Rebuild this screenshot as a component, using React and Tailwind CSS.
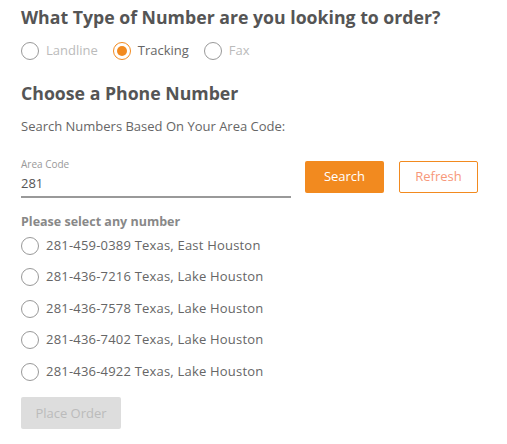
import { useState } from 'react'

const numbers = [
  '281-459-0389 Texas, East Houston',
  '281-436-7216 Texas, Lake Houston',
  '281-436-7578 Texas, Lake Houston',
  '281-436-7402 Texas, Lake Houston',
  '281-436-4922 Texas, Lake Houston',
]

// Radio
function Radio({ checked, label, muted, className = '' }) {
  return (
    <label className="flex items-center gap-[7px] cursor-pointer">
      <span className={`w-[18px] h-[18px] rounded-full border flex items-center justify-center ${checked ? 'border-[#f28a1f]' : 'border-[#999]'}`}>
        {checked && <span className="w-[10px] h-[10px] rounded-full bg-[#f28a1f]" />}
      </span>
      <span className={`text-[13px] ${muted ? 'text-[#bbb]' : 'text-[#666]'} ${className}`}>{label}</span>
    </label>
  )
}

export default function App() {
  const [type] = useState('Tracking')
  return (
    <div className="bg-white w-[507px] h-[444px] px-[21px] pt-[5px]" style={{ fontFamily: '"Open Sans", sans-serif' }}>
      <h2 className="text-[17.7px] font-bold text-[#555] leading-[24px]">What Type of Number are you looking to order?</h2>
      <div className="flex items-center gap-[15px] mt-[12px]">
        {['Landline', 'Tracking', 'Fax'].map(t => (
          <Radio key={t} label={t} checked={type === t} muted={type !== t} />
        ))}
      </div>

      <h2 className="text-[17.7px] font-bold text-[#555] leading-[24px] mt-[20px]">Choose a Phone Number</h2>
      <p className="text-[13px] text-[#666] mt-[12px]">Search Numbers Based On Your Area Code:</p>

      <div className="flex items-start mt-[22px]">
        <div className="w-[270px]">
          <p className="text-[10px] text-[#999] leading-[12px]">Area Code</p>
          <p className="text-[13px] text-[#555] leading-[18px] mt-[4px] pb-[4px] border-b-2 border-[#999]">281</p>
        </div>
        <button className="ml-[14px] mt-[3px] w-[79px] h-[32px] bg-[#f28a1f] rounded-[2px] text-white text-[13px]">Search</button>
        <button className="ml-[15px] mt-[3px] w-[79px] h-[32px] border border-[#f28a1f] rounded-[2px] text-[#f7987a] text-[13px]">Refresh</button>
      </div>

      <p className="text-[12.5px] font-bold text-[#888] mt-[15px]">Please select any number</p>
      <div className="flex flex-col gap-[12px] mt-[4px]">
        {numbers.map(n => (
          <Radio key={n} label={n} className="tracking-[0.2px]" />
        ))}
      </div>

      <button className="mt-[16px] w-[100px] h-[32px] bg-[#ddd] rounded-[2px] text-[#bbb] text-[13px]">Place Order</button>
    </div>
  )
}
